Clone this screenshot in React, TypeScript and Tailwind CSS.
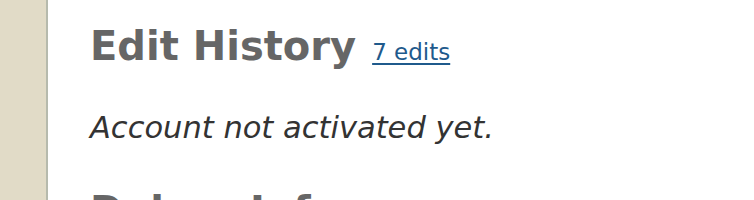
import React from "react";

export default function App() {
  return (
    <div className="flex h-[200px] w-[754px] overflow-hidden bg-white" style={{ fontFamily: '"DejaVu Sans", sans-serif' }}>
      <div className="w-[48px] shrink-0 border-r-2 border-[#b6baad] bg-[#e1dbc7]" />
      <div className="flex-1 pl-[42px] pt-[20px]">
        <div className="flex items-baseline">
          <h2 className="text-[40px] font-bold leading-[52px] text-[#666666]">Edit History</h2>
          <a href="#" className="ml-[16px] text-[23px] text-[#1f5a8c] underline decoration-[2px] underline-offset-[3px]">7 edits</a>
        </div>
        <p className="mt-[36px] text-[30.5px] italic leading-[40px] text-[#333333]">Account not activated yet.</p>
        <h2 className="mt-[37px] text-[40px] font-bold leading-[52px] text-[#666666]">Debug Info</h2>
      </div>
    </div>
  );
}
